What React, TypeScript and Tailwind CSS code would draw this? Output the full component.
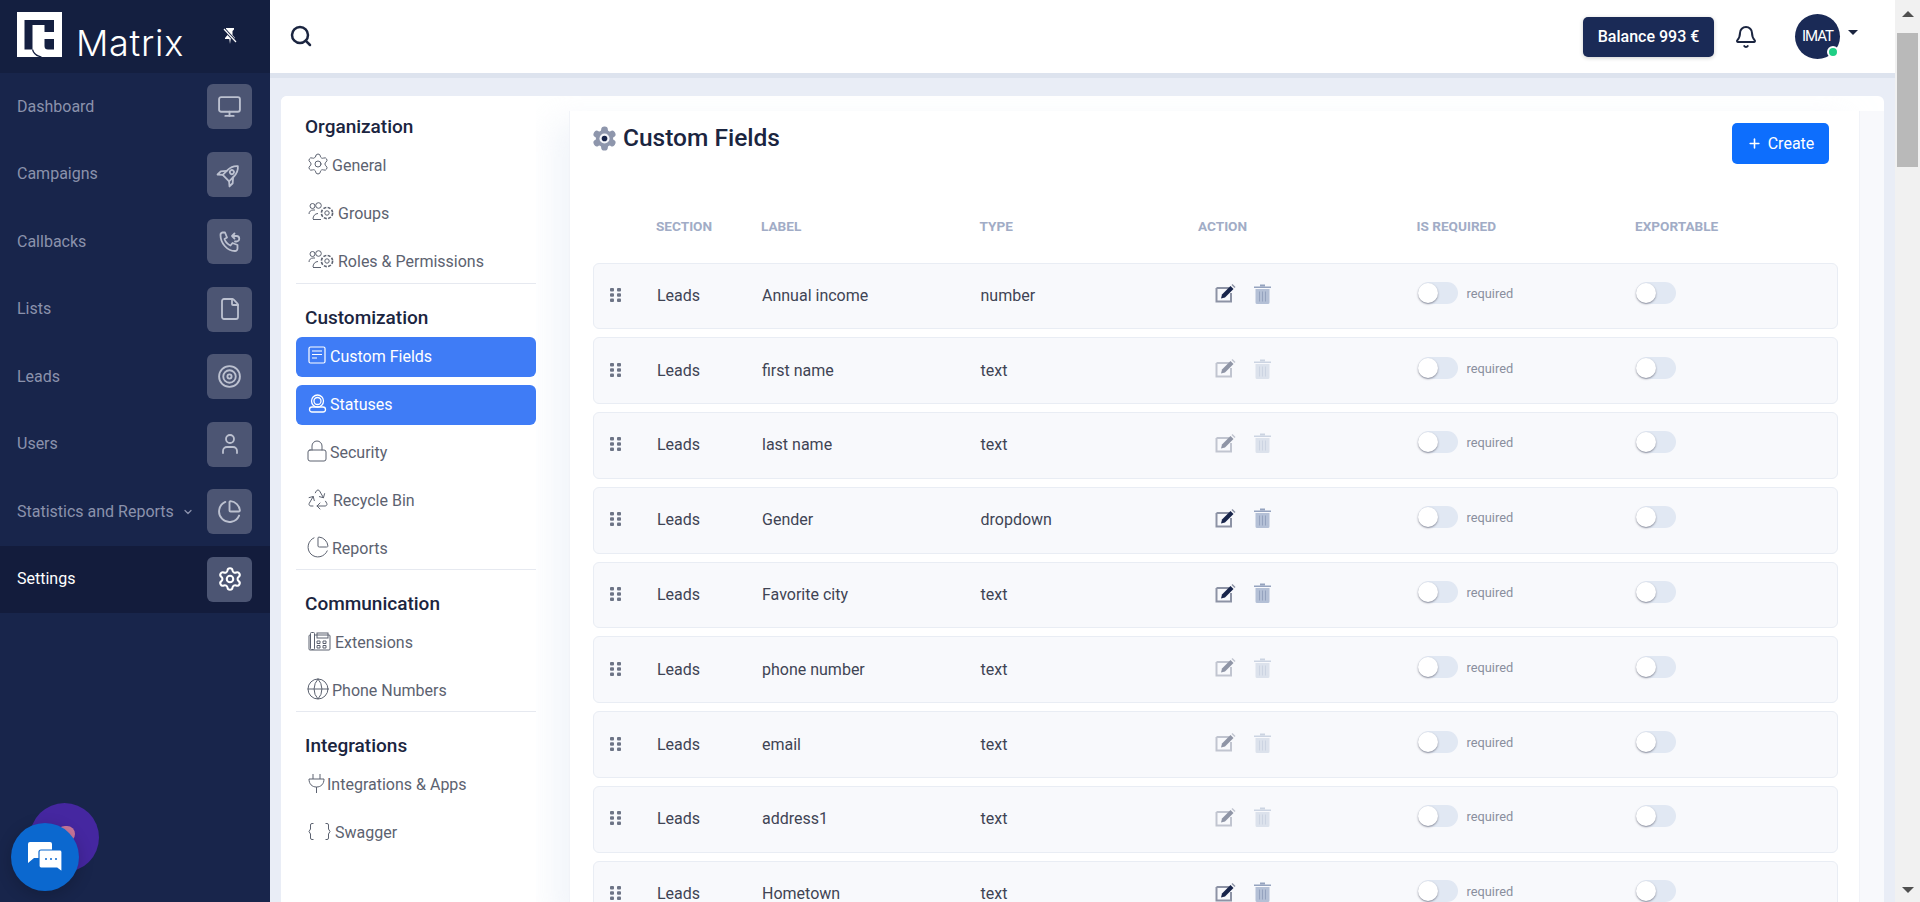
import { Bell, ChartPie, File, Globe, Lock, Monitor, Plus, Recycle, Search, Settings, Target, User, ChevronDown } from "lucide-react";
import type { FC, ReactNode } from "react";

const gearPath =
  "M12.22 2h-.44a2 2 0 0 0-2 2v.18a2 2 0 0 1-1 1.73l-.43.25a2 2 0 0 1-2 0l-.15-.08a2 2 0 0 0-2.73.73l-.22.38a2 2 0 0 0 .73 2.73l.15.1a2 2 0 0 1 1 1.72v.51a2 2 0 0 1-1 1.74l-.15.09a2 2 0 0 0-.73 2.73l.22.38a2 2 0 0 0 2.73.73l.15-.08a2 2 0 0 1 2 0l.43.25a2 2 0 0 1 1 1.73V20a2 2 0 0 0 2 2h.44a2 2 0 0 0 2-2v-.18a2 2 0 0 1 1-1.73l.43-.25a2 2 0 0 1 2 0l.15.08a2 2 0 0 0 2.73-.73l.22-.39a2 2 0 0 0-.73-2.73l-.15-.08a2 2 0 0 1-1-1.74v-.5a2 2 0 0 1 1-1.74l.15-.09a2 2 0 0 0 .73-2.73l-.22-.38a2 2 0 0 0-2.73-.73l-.15.08a2 2 0 0 1-2 0l-.43-.25a2 2 0 0 1-1-1.73V4a2 2 0 0 0-2-2z";

const Logo = () => (
  <svg width="45" height="45" viewBox="0 0 45 45" className="shrink-0">
    <rect width="45" height="45" fill="#fff" />
    <path d="M7.500 8H37v12H27.500V13H15.500v24.500H7.500z" fill="#141f40" />
    <path d="M27.500 27H37v10.500H31a3.500 3.500 0 0 1-3.500-3.500z" fill="#141f40" />
    <path d="M15.500 37.500c1 4 4.500 6.500 9 7.500" fill="none" stroke="#141f40" strokeWidth="1.200" />
  </svg>
);

const RocketIcon = () => (
  <svg width="27" height="27" viewBox="0 0 24 24" fill="none" stroke="currentColor" strokeWidth="1.600" strokeLinejoin="round" strokeLinecap="round">
    <g transform="rotate(45 12 12)">
      <path d="M12 1.500c3 2.500 4 6 4 9v6H8v-6c0-3 1-6.500 4-9z" />
      <circle cx="12" cy="9" r="1.800" />
      <path d="M8 11.500l-3.500 4v4l3.500-3M16 11.500l3.500 4v4l-3.500-3" />
    </g>
  </svg>
);

const CallbackIcon = () => (
  <svg width="24" height="24" viewBox="0 0 24 24" fill="none" stroke="currentColor" strokeWidth="1.8" strokeLinecap="round" strokeLinejoin="round">
    <path d="M4.500 2.500h2.500l2 5-2.500 1.500a11 11 0 0 0 6 6.500L14.500 13l5 2v3.500a2.500 2.500 0 0 1-2.500 2.500C9 21 2.500 13 2.500 5a2.500 2.500 0 0 1 2-2.500" />
    <path d="M14 6h4.500a2.500 2.500 0 0 1 0 5.500H17M16.500 3.500L14 6l2.500 2.500" />
  </svg>
);

const UsersGear = () => (
  <svg width="26" height="20" viewBox="0 0 26 20" fill="none" stroke="currentColor" strokeWidth="1">
    <circle cx="4.500" cy="4" r="2.500" />
    <path d="M1 12c0-2.500 2-4 4-4h2" />
    <circle cx="10.500" cy="3.500" r="2.800" />
    <path d="M5 17c0-3 2-5.500 5-5.500" />
    <path d="M5 17.500h8" />
    <circle cx="19" cy="11" r="2.200" />
    <circle cx="19" cy="11" r="5.600" strokeDasharray="3 1.400" strokeWidth="1.600" />
  </svg>
);

const FieldsIcon = () => (
  <svg width="18" height="18" viewBox="0 0 18 18" fill="none" stroke="currentColor" strokeWidth="1.200">
    <rect x="1" y="1" width="16" height="16" rx="1.500" />
    <path d="M4 5h10M4 8.500h10M4 12h5" />
  </svg>
);

const StatusIcon = () => (
  <svg width="19" height="19" viewBox="0 0 19 19" fill="none" stroke="currentColor" strokeWidth="1.300">
    <circle cx="9.500" cy="7" r="6" />
    <circle cx="9.500" cy="7" r="3.500" />
    <rect x="1.500" y="13" width="16" height="5" rx="2.500" />
  </svg>
);

const ExtensionIcon = () => (
  <svg width="23" height="19" viewBox="0 0 23 19" fill="none" stroke="currentColor" strokeWidth="1">
    <rect x="1" y="3" width="21" height="15" rx="1" />
    <rect x="2.500" y="0.500" width="4" height="17" rx="1" fill="#fff" />
    <rect x="9" y="1" width="11" height="5" />
    <path d="M9 9h3v2.500h-3zM15 9h3v2.500h-3zM9 13.500h3v2.500h-3zM15 13.500h3v2.500h-3z" />
  </svg>
);

const PlugIcon = () => (
  <svg width="17" height="21" viewBox="0 0 17 21" fill="none" stroke="currentColor" strokeWidth="1">
    <path d="M5 1v5M12 1v5M1 6h15c0 5-3 8-7.500 8S1 11 1 6ZM8.500 14v6" />
  </svg>
);

const SwaggerIcon = () => (
  <svg width="23" height="19" viewBox="0 0 23 19" fill="none" stroke="currentColor" strokeWidth="1">
    <path d="M5.500 1.500H4a1.500 1.500 0 0 0-1.500 1.500v4L1 9.500 2.500 12v4A1.500 1.500 0 0 0 4 17.500h1.500" />
    <path d="M17.500 1.500H19a1.500 1.500 0 0 1 1.500 1.500v4L22 9.500 20.500 12v4a1.500 1.500 0 0 1-1.500 1.500h-1.500" />
  </svg>
);

const GripIcon = () => (
  <svg width="11" height="14" viewBox="0 0 11 14" fill="#6d7486">
    <rect x="0" y="0" width="4" height="3.500" rx="1" />
    <rect x="7" y="0" width="4" height="3.500" rx="1" />
    <rect x="0" y="5.200" width="4" height="3.500" rx="1" />
    <rect x="7" y="5.200" width="4" height="3.500" rx="1" />
    <rect x="0" y="10.500" width="4" height="3.500" rx="1" />
    <rect x="7" y="10.500" width="4" height="3.500" rx="1" />
  </svg>
);

const EditIcon: FC<{ enabled: boolean }> = ({ enabled }) => (
  <svg width="22" height="19" viewBox="0 0 21 19" fill="none">
    <path d="M1 4h12v1.500M15.500 9v8.500H1V4" stroke={enabled ? "#8d93a5" : "#c1c5d0"} strokeWidth="2" />
    <path d="M5.500 14.500l1-4L15 2l3 3-8.500 8.500z" fill={enabled ? "#18254b" : "#8f95a6"} />
    <path d="M16 1l1-1 3 3-1 1z" fill={enabled ? "#8d93a5" : "#c1c5d0"} />
  </svg>
);

const TrashIcon: FC<{ enabled: boolean }> = ({ enabled }) => (
  <svg width="17" height="20" viewBox="0 0 17 20" fill={enabled ? "#b4c0d6" : "#dce2ec"}>
    <path d="M0 2.500h17V4H0z" fill={enabled ? "#95a3bf" : "#ccd4e2"} />
    <path d="M6 .5h5v2H6z" fill={enabled ? "#95a3bf" : "#ccd4e2"} />
    <path d="M1.500 5h14v13.500a1.500 1.500 0 0 1-1.500 1.500H3a1.500 1.500 0 0 1-1.500-1.500z" />
    <path d="M5.500 7.500v10M8.500 7.500v10M11.500 7.500v10" stroke={enabled ? "#95a3bf" : "#ccd4e2"} strokeWidth="1" />
  </svg>
);

const Toggle = () => (
  <span className="relative block h-[22px] w-10 rounded-full bg-[#e1e8f3]">
    <span className="absolute left-0 top-px h-5 w-5 rounded-full bg-white shadow-[0_1px_2px_rgba(40,40,60,0.5)]" />
  </span>
);

const navItems: { label: string; icon: ReactNode; active?: boolean; caret?: boolean }[] = [
  { label: "Dashboard", icon: <Monitor size={25} strokeWidth={1.8} /> },
  { label: "Campaigns", icon: <RocketIcon /> },
  { label: "Callbacks", icon: <CallbackIcon /> },
  { label: "Lists", icon: <File size={24} strokeWidth={1.8} /> },
  { label: "Leads", icon: <Target size={25} strokeWidth={1.8} /> },
  { label: "Users", icon: <User size={24} strokeWidth={1.8} /> },
  { label: "Statistics and Reports", icon: <ChartPie size={25} strokeWidth={1.8} />, caret: true },
  { label: "Settings", icon: <Settings size={26} strokeWidth={1.9} />, active: true },
];

const settingsGroups: {
  title: string;
  items: { label: string; icon: ReactNode; active?: boolean; gap?: string }[];
}[] = [
  {
    title: "Organization",
    items: [
      { label: "General", icon: <Settings size={24} strokeWidth={1} className="-ml-[2px]" />, gap: "gap-[2px]" },
      { label: "Groups", icon: <UsersGear />, gap: "gap-[4px]" },
      { label: "Roles & Permissions", icon: <UsersGear />, gap: "gap-[4px]" },
    ],
  },
  {
    title: "Customization",
    items: [
      { label: "Custom Fields", icon: <FieldsIcon />, active: true, gap: "gap-[4px]" },
      { label: "Statuses", icon: <StatusIcon />, active: true, gap: "gap-[3px]" },
      { label: "Security", icon: <Lock size={24} strokeWidth={1} className="-ml-[3px]" />, gap: "gap-px" },
      { label: "Recycle Bin", icon: <Recycle size={24} strokeWidth={1} className="-ml-[2px]" />, gap: "gap-[3px]" },
      { label: "Reports", icon: <ChartPie size={24} strokeWidth={1} className="-ml-[2px]" />, gap: "gap-[2px]" },
    ],
  },
  {
    title: "Communication",
    items: [
      { label: "Extensions", icon: <ExtensionIcon />, gap: "gap-[4px]" },
      { label: "Phone Numbers", icon: <Globe size={24} strokeWidth={1} className="-ml-[2px]" />, gap: "gap-[2px]" },
    ],
  },
  {
    title: "Integrations",
    items: [
      { label: "Integrations & Apps", icon: <PlugIcon />, gap: "gap-[2px]" },
      { label: "Swagger", icon: <SwaggerIcon />, gap: "gap-[4px]" },
    ],
  },
];

const rows = [
  { label: "Annual income", type: "number", enabled: true },
  { label: "first name", type: "text", enabled: false },
  { label: "last name", type: "text", enabled: false },
  { label: "Gender", type: "dropdown", enabled: true },
  { label: "Favorite city", type: "text", enabled: true },
  { label: "phone number", type: "text", enabled: false },
  { label: "email", type: "text", enabled: false },
  { label: "address1", type: "text", enabled: false },
  { label: "Hometown", type: "text", enabled: true },
];

const gridCols = "grid grid-cols-[63px_105px_repeat(4,218.5px)_1fr] items-center";

const Sidebar = () => (
  <aside className="relative flex h-full w-[270px] shrink-0 flex-col bg-[#18254b]">
    <div className="flex h-[73px] shrink-0 items-start bg-[#141f40] pl-[17px] pt-3">
      <Logo />
      <span className="ml-[14px] mt-[13px] font-['Inter'] text-[36px] font-light leading-[36px] tracking-[0.7px] text-white">
        Matrix
      </span>
      <svg width="14" height="16" viewBox="0 0 14 16" fill="#fff" className="ml-[39px] mt-[16px]">
        <path d="M3 0h8v1.500L9.500 3v4l2.500 3v1H2v-1l2.500-3V3L3 1.500zM6.300 11h1.400L7 16z" />
        <path d="M1 1l12 13" stroke="#141f40" strokeWidth="3" />
        <path d="M1 1l12 13" stroke="#fff" strokeWidth="1.200" />
      </svg>
    </div>
    <nav className="flex flex-col">
      {navItems.map((item) => (
        <div
          key={item.label}
          className={`flex h-[67.500px] items-center justify-between pl-[17px] pr-[18px] ${item.active ? "bg-[#131c3c] text-white" : "text-[#8b92ac]"}`}
        >
          <span className="flex items-center text-base">
            {item.label}
            {item.caret && <ChevronDown size={12} strokeWidth={2.5} className="ml-2" />}
          </span>
          <span className={`flex h-[45px] w-[45px] items-center justify-center rounded-md bg-[#4c5573] ${item.active ? "text-white" : "text-[#bcc1d0]"}`}>
            {item.icon}
          </span>
        </div>
      ))}
    </nav>
    <div className="absolute left-[30px] top-[803px] h-[69px] w-[69px] rounded-full bg-[#4527a0]" />
    <div className="absolute left-[57px] top-[826px] h-4 w-[18px] rounded-full bg-[#c9769a]" />
    <div className="absolute left-[11px] top-[823px] flex h-[68px] w-[68px] items-center justify-center rounded-full bg-[#0b68cf] shadow-[0_4px_16px_rgba(0,0,0,0.2)]">
      <svg width="36" height="32" viewBox="0 0 36 32">
        <path d="M3 1h20a2 2 0 0 1 2 2v12a2 2 0 0 1-2 2H7l-6 5V3a2 2 0 0 1 2-2z" fill="#fff" />
        <path d="M14 9h19a2 2 0 0 1 2 2v20l-5-4H14a2 2 0 0 1-2-2V11a2 2 0 0 1 2-2z" fill="#fff" stroke="#0b68cf" strokeWidth="1.200" />
        <circle cx="19" cy="18" r="1" fill="#0b68cf" />
        <circle cx="24" cy="18" r="1" fill="#0b68cf" />
        <circle cx="29" cy="18" r="1" fill="#0b68cf" />
      </svg>
    </div>
  </aside>
);

const TopBar = () => (
  <header className="flex h-[73px] shrink-0 items-center bg-white pl-[19px] pr-[37px] shadow-[0_5px_0_#dde3ee]">
    <Search size={24} strokeWidth={2.5} className="-translate-y-px text-[#1b2540]" />
    <div className="ml-auto flex items-center">
      <div className="flex h-10 w-[131px] items-center justify-center rounded-[5px] bg-[#1a2a56] text-base font-medium text-white shadow-[0_1px_4px_rgba(0,0,0,0.2)]">
        Balance 993 €
      </div>
      <Bell size={24} strokeWidth={2} className="ml-[20px] text-[#1b2540]" />
      <div className="relative ml-[37px] flex h-[45px] w-[45px] items-center justify-center rounded-full bg-[#1a2a56] text-[15px] tracking-[-1px] text-white">
        IMAT
        <span className="absolute bottom-px right-px h-3 w-3 rounded-full border-2 border-white bg-[#1fcf85]" />
      </div>
      <span className="mb-2 ml-2 h-0 w-0 border-x-[5px] border-t-[5px] border-x-transparent border-t-[#1b2540]" />
    </div>
  </header>
);

const SettingsMenu = () => (
  <div className="relative z-10 mr-[33px] w-[255px] shrink-0 bg-white pl-[15px]">
    <div className="w-[240px] pt-4">
      {settingsGroups.map((group, i) => (
        <div
          key={group.title}
          className={i < settingsGroups.length - 1 ? `mb-[19px] border-b border-[#e6e9f0] ${i === 0 ? "pb-px" : "pb-0"}` : ""}
        >
          <h3 className="mb-[4px] pl-[9px] text-[19px] font-medium leading-[30px] text-[#1b2540]">{group.title}</h3>
          <div className="flex flex-col gap-2">
            {group.items.map((item) => (
              <div
                key={item.label}
                className={`flex h-10 items-center rounded-md pl-3 text-base ${item.gap} ${item.active ? "bg-[#3f7cf6] text-white" : "text-[#5c6270]"}`}
              >
                <span className="-mt-1 flex shrink-0">{item.icon}</span>
                {item.label}
              </div>
            ))}
          </div>
        </div>
      ))}
    </div>
  </div>
);

const FieldsTable = () => (
  <section className="mt-[15px] h-full flex-1 border-x border-[#f1f3f8] bg-white pl-[23px] pr-[21px] shadow-[-16px_10px_30px_rgba(232,236,245,0.55)]">
    <div className="flex h-[80px] items-start justify-between">
      <div className="flex items-center gap-[5px] pt-[9px]">
        <svg width="27" height="27" viewBox="0 0 24 24" fill="#8e96ac" stroke="#8e96ac" strokeWidth="1.500" className="-ml-[2px]">
          <path d={gearPath} />
          <circle cx="12" cy="12" r="4.500" fill="#f3f4f8" stroke="none" />
          <circle cx="12" cy="12" r="2.500" fill="#18254b" stroke="none" />
        </svg>
        <h1 className="text-[24.500px] font-medium leading-[36px] text-[#1b2540]">Custom Fields</h1>
      </div>
      <button className="mr-[9px] mt-[12px] flex h-[41px] w-[97px] items-center justify-center gap-[6px] rounded-[5px] bg-[#0d6efd] text-base text-white">
        <Plus size={15} strokeWidth={2.5} />
        Create
      </button>
    </div>
    <div className={`${gridCols} h-[71.500px] -translate-y-px text-[13.600px] font-bold text-[#a1acc6]`}>
      <span />
      <span>SECTION</span>
      <span>LABEL</span>
      <span>TYPE</span>
      <span>ACTION</span>
      <span>IS REQUIRED</span>
      <span>EXPORTABLE</span>
    </div>
    {rows.map((row) => (
      <div
        key={row.label}
        className={`${gridCols} mb-2 h-[66.800px] rounded-md border border-[#e9edf4] bg-[#f8f9fc] text-base leading-4 text-[#3f4454]`}
      >
        <span className="flex -translate-y-px pl-4">
          <GripIcon />
        </span>
        <span>Leads</span>
        <span>{row.label}</span>
        <span>{row.type}</span>
        <span className="flex -translate-y-[2px] items-center gap-[17px] pl-[16px]">
          <EditIcon enabled={row.enabled} />
          <TrashIcon enabled={row.enabled} />
        </span>
        <span className="flex -translate-y-[3px] items-center gap-[9px]">
          <Toggle />
          <span className="translate-y-px text-[12.800px] text-[#8a8f9e]">required</span>
        </span>
        <span className="-translate-y-[3px]">
          <Toggle />
        </span>
      </div>
    ))}
  </section>
);

const Scrollbar = () => (
  <div className="flex h-full w-[25px] shrink-0 flex-col items-center justify-between bg-[#f1f1f1] pb-[9px] pt-[11px]">
    <div className="flex w-full flex-col items-center">
      <span className="h-0 w-0 border-x-[6px] border-b-[6px] border-x-transparent border-b-[#505050]" />
      <span className="mt-4 h-[134px] w-[21px] bg-[#b9b9b9]" />
    </div>
    <span className="h-0 w-0 border-x-[6px] border-t-[6px] border-x-transparent border-t-[#505050]" />
  </div>
);

const App = () => {
  return (
    <div className="flex h-[902px] w-[1920px] overflow-hidden bg-[#e9edf6] font-['Roboto',sans-serif]">
      <Sidebar />
      <div className="flex h-full min-w-0 flex-1 flex-col">
        <TopBar />
        <main className="mx-[11px] mt-[23px] flex min-h-0 flex-1 overflow-hidden rounded-t-md bg-white">
          <SettingsMenu />
          <FieldsTable />
          <div className="mt-[15px] w-6 shrink-0 bg-[#f8f9fc]" />
        </main>
      </div>
      <Scrollbar />
    </div>
  );
};

export default App;
